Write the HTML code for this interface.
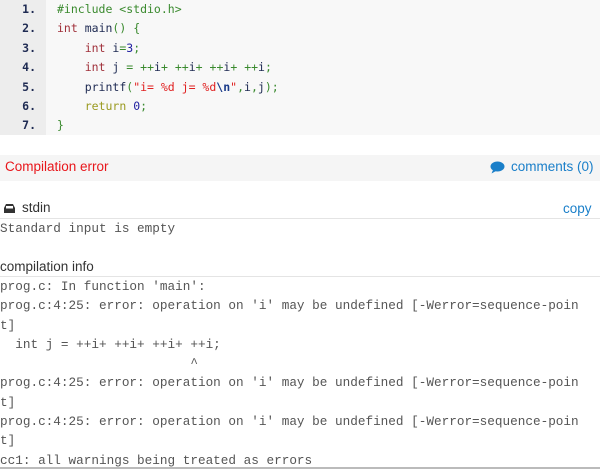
<!DOCTYPE html>
<html><head><style>
body{margin:0;width:600px;height:469px;background:#fff;position:relative;overflow:hidden;font-family:"Liberation Sans",sans-serif}
.code{position:absolute;left:0;top:0;width:600px;height:135px;background:#f8f8f8}
.gut{position:absolute;left:0;top:0;width:46px;height:135px;background:#ededed}
.ln{position:absolute;font-family:"DejaVu Sans Mono",monospace;font-size:11.5px;line-height:19.4px;white-space:pre}
.nums{left:0;width:36px;text-align:right;top:0;color:#1e2a52;font-weight:bold}
.src{left:57px;top:0;color:#333}
.g{color:#3a8a2e}.k{color:#a0303a}.b{color:#1a3b8a}.n{color:#2020a0}.s{color:#e02020}.y{color:#9a9a20}.f{color:#1e2a52}
.bar{position:absolute;left:0;top:155px;width:600px;height:26px;background:#f5f5f5}
.t{position:absolute;font-size:13.5px;white-space:nowrap}
.pre{position:absolute;left:0;font-family:"Liberation Mono",monospace;font-size:12.7px;line-height:19.3px;color:#555;white-space:pre;margin:0}
.hr{position:absolute;left:0;width:600px;height:1px;background:#e4e4e4}
</style></head><body>
<div class="code"></div><div class="gut"></div>
<div class="ln nums">1.
2.
3.
4.
5.
6.
7.</div>
<div class="ln src"><span class="g">#include &lt;stdio.h&gt;</span>
<span class="k">int</span> <span class="f">main</span><span class="g">()</span> <span class="g">{</span>
    <span class="k">int</span> <span class="f">i</span><span class="g">=</span><span class="n">3</span><span class="g">;</span>
    <span class="k">int</span> <span class="f">j</span> <span class="g">=</span> <span class="g">++</span><span class="f">i</span><span class="g">+</span> <span class="g">++</span><span class="f">i</span><span class="g">+</span> <span class="g">++</span><span class="f">i</span><span class="g">+</span> <span class="g">++</span><span class="f">i</span><span class="g">;</span>
    <span class="f">printf</span><span class="g">(</span><span class="s">"i= %d j= %d<b class="b">\n</b>"</span><span class="g">,</span><span class="f">i</span><span class="g">,</span><span class="f">j</span><span class="g">);</span>
    <span class="y">return</span> <span class="n">0</span><span class="g">;</span>
<span class="g">}</span></div>
<div class="bar"></div>
<div class="t" style="left:5px;top:159px;color:#e8161b">Compilation error</div>
<svg style="position:absolute;left:490px;top:161px" width="15" height="13" viewBox="0 0 15 13"><ellipse cx="7.5" cy="5.5" rx="7" ry="5" fill="#1a7fc9"/><path d="M3 9 L1.5 12.5 L6 10 Z" fill="#1a7fc9"/></svg>
<div class="t" style="left:511px;top:159px;color:#1a7fc9">comments (0)</div>
<svg style="position:absolute;left:3px;top:203px" width="13" height="11" viewBox="0 0 13 11"><path d="M1 5 L3 1 H10 L12 5 V10 H1 Z" fill="#333"/><rect x="3" y="3" width="7" height="2.5" fill="#fff"/></svg>
<div class="t" style="left:22px;top:200px;color:#333">stdin</div>
<div class="t" style="left:563px;top:201px;color:#1a7fc9">copy</div>
<div class="hr" style="top:218px"></div>
<pre class="pre" style="top:219px">Standard input is empty</pre>
<div class="t" style="left:0;top:259px;color:#333">compilation info</div>
<div class="hr" style="top:276px"></div>
<pre class="pre" style="top:277px">prog.c: In function 'main':
prog.c:4:25: error: operation on 'i' may be undefined [-Werror=sequence-poin
t]
  int j = ++i+ ++i+ ++i+ ++i;
                         ^
prog.c:4:25: error: operation on 'i' may be undefined [-Werror=sequence-poin
t]
prog.c:4:25: error: operation on 'i' may be undefined [-Werror=sequence-poin
t]
cc1: all warnings being treated as errors</pre>
<div class="hr" style="top:467px;height:2px;background:#bbb"></div>
</body></html>
